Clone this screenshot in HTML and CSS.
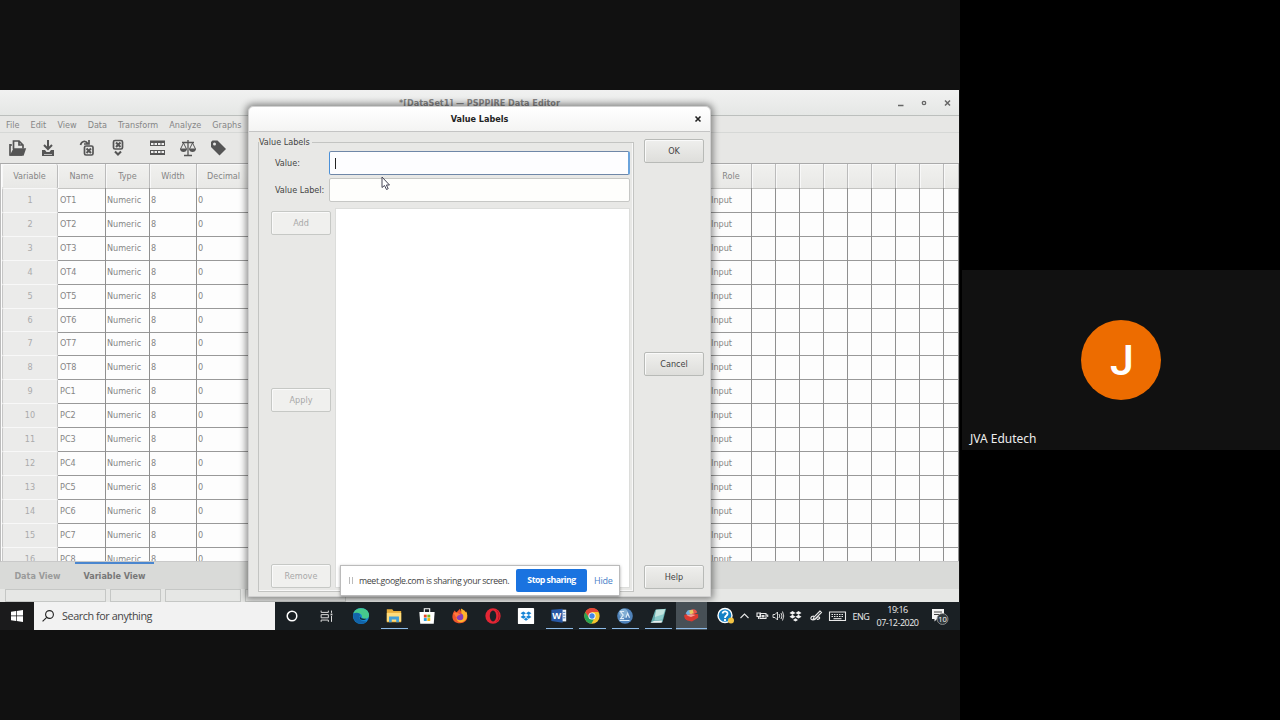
FILE: index.html
```
<!DOCTYPE html>
<html lang="en">
<head>
    <meta charset="UTF-8">
    <title>Value Labels</title>
    <link rel="stylesheet" href="styles.css">
</head>
<body>
    <div class="meeting">
        <div class="screen">
            <div class="app">
                <div class="titlebar">
                    <span class="app-title">*[DataSet1] — PSPPIRE Data Editor</span>
                    <svg class="win-btns" width="56" height="12" viewBox="0 0 56 12" fill="none" stroke="#666" stroke-width="1.500">
                        <path d="M1 8.500h5.500"/><circle cx="27" cy="6" r="1.700" stroke-width="1.300"/><path d="M48 3.500l5 5M53 3.500l-5 5"/>
                    </svg>
                </div>
                <div class="menubar">
                    <span>File</span><span>Edit</span><span>View</span><span>Data</span><span>Transform</span><span>Analyze</span><span>Graphs</span>
                </div>
                <div class="toolbar">
                    <svg width="240" height="30" viewBox="0 0 240 30" fill="none" stroke="#555" stroke-width="1.700">
                        <!-- open -->
                        <path d="M10 11v11h12M10 12h2M13.500 16V8h5.500l4 4v3.500M19 8v4h4"/>
                        <path d="M14 16h11l-2 6H11z" fill="#555"/>
                        <!-- save -->
                        <path d="M48 7v9M44 12l4 4 4-4" stroke-width="2"/>
                        <path d="M42 17h3l1.500 2h3l1.500-2h3v6H42z" fill="#555" stroke="none"/><path d="M44 21.500h8" stroke="#bbb" stroke-width="1"/>
                        <!-- go to case -->
                        <path d="M80.500 12c1-4 5-5 7.500-1M89 7v4h-5"/>
                        <rect x="84.500" y="13" width="8.500" height="9" rx="1.500"/><path d="M86.500 15.500l4.500 4.500M91 15.500l-4.500 4.500" stroke-width="2"/>
                        <!-- go to variable -->
                        <rect x="113.500" y="7.500" width="9" height="8.500" rx="1.500"/><path d="M116 9.500l4.500 4.500M120.500 9.500l-4.500 4.500M115 18.500l3 3 3-3" stroke-width="2.100"/>
                        <!-- split -->
                        <path d="M150 7.500h15v5.500h-15zM150 17h15v5h-15z" fill="#555" stroke="none"/>
                        <path d="M151 11h13M151 19h13" stroke="#eee" stroke-width="1.800" stroke-dasharray="2.500 1"/>
                        <!-- weights -->
                        <path d="M188 7v15M184 22.500h8M182 9.500h12" stroke-width="1.300"/>
                        <path d="M183.500 10l-3 6h6zM192.500 10l-3 6h6z" stroke-width="1"/>
                        <path d="M180 16h7q-.5 3-3.500 3t-3.500-3zM189 16h7q-.5 3-3.500 3t-3.500-3z" fill="#555" stroke="none"/>
                        <!-- labels -->
                        <path d="M211 9l1.500-1.500h5L226 16l-6.500 6.500L211 14z" fill="#555" stroke="none"/><circle cx="214.500" cy="11" r="1.500" fill="#e6e6e4" stroke="none"/>
                    </svg>
                </div>
                <div class="sheet" id="sheet">
                    <div class="row head">
                        <b></b><span>Variable</span><span>Name</span><span>Type</span><span>Width</span><span>Decimal</span><span></span><span>Role</span>
                        <span></span><span></span><span></span><span></span><span></span><span></span><span></span><span></span><span></span>
                    </div>
                </div>
                <div class="tabs"><span class="tab">Data View</span><span class="tab active">Variable View</span></div>
                <div class="statusbar"><i></i><i></i><i></i><i></i></div>

                <div class="dialog">
                    <div class="dialog-title">Value Labels
                        <svg class="close" width="8" height="8" viewBox="0 0 8 8" stroke="#222" stroke-width="1.600"><path d="M1.500 1.500l5 5M6.500 1.500l-5 5"/></svg>
                    </div>
                    <div class="dialog-body">
                        <fieldset class="frame">
                            <legend>Value Labels</legend>
                            <div class="field"><label>Value:</label><div class="entry focus"><i class="caret"></i></div></div>
                            <div class="field"><label>Value Label:</label><div class="entry"></div></div>
                            <div class="list-area">
                                <div class="side">
                                    <div class="button off">Add</div>
                                    <div class="button off">Apply</div>
                                    <div class="button off">Remove</div>
                                </div>
                                <div class="list"></div>
                            </div>
                        </fieldset>
                        <div class="actions">
                            <div class="button">OK</div>
                            <div class="button">Cancel</div>
                            <div class="button">Help</div>
                        </div>
                    </div>
                </div>

                <div class="share">
                    <i class="grip"></i>
                    <span class="share-text">meet.google.com is sharing your screen.</span>
                    <span class="stop">Stop sharing</span>
                    <span class="hide">Hide</span>
                </div>

                <svg class="pointer" width="10" height="15" viewBox="0 0 10 15"><path d="M1 1v10.500l2.500-2 2 4 1.700-.8-1.800-3.700H8.500z" fill="#fff" stroke="#445" stroke-width="1"/></svg>
            </div>

            <div class="taskbar">
                <div class="start">
                    <svg width="12" height="12" viewBox="0 0 12 12" fill="#fff"><path d="M0 1.700L5 1v4.600H0zM5.700.9L12 0v5.600H5.700zM0 6.300h5V11l-5-.7zM5.700 6.300H12V12l-6.300-.9z"/></svg>
                </div>
                <div class="search">
                    <svg width="12" height="12" viewBox="0 0 12 12" fill="none" stroke="#222" stroke-width="1.100"><circle cx="7.500" cy="4.500" r="3.900"/><path d="M4.700 7.300L.6 11.400"/></svg>
                    <span>Search for anything</span>
                </div>
                <div class="apps">
                    <span class="tool"><svg viewBox="0 0 20 20" fill="none" stroke="#fff" stroke-width="1.700"><circle cx="10" cy="10" r="5.300"/></svg></span>
                    <span class="tool"><svg viewBox="0 0 20 20" fill="none" stroke="#ddd" stroke-width="1.100"><path d="M3.500 4v2h8V4M3.500 8.500h8v3.500h-8zM3.500 16.500v-2h8v2M15 4v2.500M15 10v6.500"/><path d="M14 8.300h2" stroke-width="2"/></svg></span>
                    <span><svg viewBox="0 0 20 20">
                        <circle cx="10" cy="10" r="9" fill="#1687d3"/><path d="M1.500 7C4 0 16-1 18.700 7c1 4-1 7-5 6-4-.5-2-2-3-4S5 6 1.500 7z" fill="#46c98d"/>
                        <path d="M1.200 8c4-3 8-1 8 1-3 3-1 7 7 7-4 5-15 3-15-8z" fill="#1263a8"/><path d="M9.500 8.500c-1.500 3 1 5 6.500 4.500-2 2-7 2-7.500-1z" fill="#142a32"/></svg></span>
                    <span class="open"><svg viewBox="0 0 20 20"><path d="M2 2.500h6L9.500 4.500H18v12.500H2z" fill="#e9ae3b"/><path d="M2 6.500h16v9.500H2z" fill="#ffdc7b"/><path d="M4.500 10.500h11V17h-3v-3h-5v3h-3z" fill="#439ed8"/></svg></span>
                    <span><svg viewBox="0 0 20 20"><path d="M7 6V2h6v4" fill="none" stroke="#fff" stroke-width="1.200"/><path d="M1.500 5.500h17L17.500 18.500h-15z" fill="#fff"/><path d="M6.500 8.500h3.200v3.200H6.500z" fill="#e64a27"/><path d="M10.400 8.500h3.200v3.200h-3.200z" fill="#78b51b"/><path d="M6.500 12.300h3.200v3.200H6.500z" fill="#249fdf"/><path d="M10.400 12.300h3.200v3.200h-3.200z" fill="#f4b400"/></svg></span>
                    <span><svg viewBox="0 0 20 20"><path d="M4 4l2 2 4-4 1 3 4-1c6 6 3 14-5 14S-1 11 4 4z" fill="#f1552c"/><path d="M11 2c2 0 5 3 5 4l1-1c3 6-1 12-6 12-3 0-5-2-5-5 2 2 6 1 6-3z" fill="#ffb32c"/><circle cx="10" cy="11" r="3.700" fill="#8b3db8"/><path d="M3 7c3-2 5 0 8 2-4 0-4 2-5 3z" fill="#ff793b"/></svg></span>
                    <span><svg viewBox="0 0 20 20"><circle cx="10" cy="10" r="8.500" fill="#e32634"/><path d="M13 3a8 8 0 010 14 9 9 0 000-14z" fill="#a70d1c"/><ellipse cx="10" cy="10" rx="3.600" ry="6" fill="#1b2228"/></svg></span>
                    <span><svg viewBox="0 0 20 20"><rect x="1" y="1" width="18" height="18" rx="1" fill="#fff"/><path d="M7 5l3 2-3 2-3-2zM13 5l3 2-3 2-3-2zM7 9l3 2-3 2-3-2zM13 9l3 2-3 2-3-2zM10 12l2.500 1.600L10 15.300l-2.500-1.700z" fill="#1785d7"/></svg></span>
                    <span class="open"><svg viewBox="0 0 20 20"><path d="M10 3h8v13h-8z" fill="#eef4fc"/><path d="M14.500 6H17M14.500 9H17M14.500 12H17" stroke="#3c72b8"/><path d="M1.500 3L14 2v15.500L1.500 15.500z" fill="#2858a5"/><text x="2.500" y="13.300" class="word-letter">W</text></svg></span>
                    <span class="open"><svg viewBox="0 0 20 20"><circle cx="10" cy="10" r="8.500" fill="#f5c52d"/><path d="M2.600 5.800a8.500 8.500 0 0115-.2H10L6.500 12z" fill="#e34436"/><path d="M2.600 5.800l4.300 6.400L12 14l-2.800 4.500A8.500 8.500 0 012.600 5.800z" fill="#29a254"/><circle cx="10" cy="10" r="4" fill="#fff"/><circle cx="10" cy="10" r="3" fill="#4486e8"/></svg></span>
                    <span class="open"><svg viewBox="0 0 20 20"><circle cx="10" cy="10" r="8.700" fill="#4f82b9"/><circle cx="8.500" cy="7" r="5" fill="#83afd4"/><path d="M9 5H5l3 4-3 4h4M11 12l2-5 2 5M4 15h11" fill="none" stroke="#dcebf7" stroke-width="1.300"/></svg></span>
                    <span class="open"><svg viewBox="0 0 20 20"><path d="M7 3l12-1-4 15-13 .5z" fill="#62a8aa"/><path d="M8 3l10-.5-3 11.500-9 1z" fill="#8ccbca"/><path d="M8 3l10-.5L16 8 6.500 11z" fill="#c3e4df"/><path d="M1.500 17.500L5.500 15.500l9-.5-.5 2.500z" fill="#e7eeee"/></svg></span>
                    <span class="open current"><svg viewBox="0 0 20 20"><path d="M2.500 9l7-2.500L18 8v4l-7 4-5-1q-4-2-3.500-6z" fill="#d93a31"/><path d="M4 7l2.500-3.500L11 3v5L6 9z" fill="#74b3e0"/><path d="M10 3q5-2 7 3l-5 2z" fill="#e7564c"/><path d="M8 4l4-1 1 4-4 1z" fill="#e8c860"/><path d="M5 9.500l6-1.500 4 1-5 2z" fill="#f2a096"/></svg></span>
                </div>
                <div class="tray">
                    <svg width="18" height="18" viewBox="0 0 18 18"><circle cx="8" cy="8.500" r="7" fill="#1581c5" stroke="#fff" stroke-width="1.400"/><path d="M5.500 6.500C6 3 11 4 10.500 7 10 9 8 8.500 8 11M8 12v2" fill="none" stroke="#fff" stroke-width="1.800"/><circle cx="14" cy="13.500" r="3" fill="#f3c444"/></svg>
                    <svg width="118" height="18" viewBox="0 0 118 18" fill="none" stroke="#e8e8e8" stroke-width="1.100">
                        <path d="M5.500 11L9.500 7l4 4"/>
                        <path d="M25 6.500h6v5h-6zM31.500 8h1.200v2M22 6h3.500v3.500H22zM23.500 9.500v2.500"/><path d="M26.500 8h3v2.500h-3z" fill="#ddd" stroke="none"/>
                        <path d="M38 7.500h2l2.500-2.500v8L40 10.500h-2zM44 7q1.500 2 0 4M46 6q2 3 0 6M47.500 4.500q2.500 4.500 0 9" stroke-width=".9"/>
                        <path d="M57.500 4l3 1.900-3 1.900-3-1.900zM63.500 4l3 1.900-3 1.900-3-1.900zM57.500 7.800l3 1.900-3 1.900-3-1.900zM63.500 7.800l3 1.900-3 1.900-3-1.900zM60.500 11.300l2.500 1.600-2.500 1.600-2.500-1.600z" fill="#f4f4f4" stroke="none"/>
                        <path d="M85 4l-6 6-1 2.500 2.500-1 6-6zM79 9c-4 0-4 4-1 4 4 0 3-4 6-3 2 1-1 3-2 2"/>
                        <path d="M94.500 5h16v8.500h-16z"/><path d="M96.500 7.500h12M96.500 9.500h12" stroke-dasharray="1.500 1"/><path d="M98.500 11.700h8"/>
                    </svg>
                    <span class="lang">ENG</span>
                    <span class="clock">19:16<br>07-12-2020</span>
                    <svg class="notes" width="20" height="18" viewBox="0 0 20 18"><path d="M1 2h12v10H6l-2.500 2.500V12H1z" fill="#f4f4f4"/><path d="M3 5h8M3 7.500h8" stroke="#444"/><circle cx="11.500" cy="12" r="5.500" fill="#333a3d" stroke="#999" stroke-width=".8"/><text x="7.300" y="15" class="badge">10</text></svg>
                </div>
            </div>
        </div>

        <div class="people">
            <div class="tile">
                <div class="avatar">J</div>
                <div class="person">JVA Edutech</div>
            </div>
        </div>
    </div>

    <script>
        var oSheet = document.getElementById('sheet');
        for(var i=1; i<=16; i++){
            var name = i <= 8 ? 'OT' + i : 'PC' + (i - 8);
            var cells = ['', i, name, 'Numeric', '8', '0', '', 'Input', '', '', '', '', '', '', '', '', ''];
            var row = document.createElement('div');
            row.className = 'row';
            for(var j=0; j<cells.length; j++){
                var cell = document.createElement(j == 0 ? 'b' : 'span');
                cell.textContent = cells[j];
                row.appendChild(cell);
            }
            oSheet.appendChild(row);
        }
    </script>
</body>
</html>
```
FILE: styles.css
```
*{
    box-sizing: border-box;
    margin: 0;
    padding: 0;
}
body{
    width: 1280px;
    height: 720px;
    overflow: hidden;
    background-color: #000;
    font-family: "DejaVu Sans Condensed", "DejaVu Sans", sans-serif;
    font-size: 9px;
}
svg{
    display: block;
    flex: none;
}
.meeting{
    display: flex;
    height: 720px;
}
.screen{
    width: 960px;
    padding: 90px 0;
    background-color: #111;
}
.app{
    position: relative;
    display: flex;
    flex-direction: column;
    width: 959px;
    height: 512px;
    overflow: hidden;
    background-color: #e7e7e5;
    color: #858585;
}

/* main window */
.titlebar{
    display: flex;
    justify-content: center;
    height: 26px;
    padding-top: 7px;
    border-bottom: 1px solid #bcbfbd;
    background: linear-gradient(#f1f1f1, #e5e7e5);
    position: relative;
}
.app-title{
    font-weight: bold;
    font-size: 9px;
    color: #858585;
    line-height: 13px;
}
.win-btns{
    position: absolute;
    right: 6px;
    top: 7px;
}
.menubar{
    display: flex;
    gap: 11.1px;
    height: 17px;
    padding-left: 6px;
    line-height: 18px;
    border-bottom: 1px solid #d6d8d6;
}
.toolbar{
    height: 31px;
    border-bottom: 1px solid #aaa;
}
.sheet{
    height: 398px;
    overflow: hidden;
    border-left: 1px solid #bbb;
    border-bottom: 1px solid #c9c9c9;
    background-color: #fdfdfd;
}
.row{
    display: grid;
    grid-template-columns: 1px 56px 48px 44px 47px 54px 460px 41px repeat(8, 24px) 15px;
    height: 23.93px;
    line-height: 24px;
}
.row span{
    padding-left: 1px;
    border-right: 1px solid #909090;
    border-bottom: 1px solid #999;
    white-space: nowrap;
}
.row span:nth-child(2){
    padding: 0;
    text-align: center;
    color: #aaa;
    background-color: #ebebea;
    border: 1px solid #c6c6c6;
    border-top-color: #f8f8f8;
    border-radius: 2px;
    line-height: 22px;
}
.row span:nth-child(3){
    padding-left: 2px;
}
.row span:nth-child(8){
    padding-left: 0;
}
.row.head span,
.row.head span:nth-child(2){
    padding: 0;
    text-align: center;
    color: #858585;
    background: linear-gradient(#f1f1ef, #e8e8e6);
    border: 0;
    border-right: 1px solid #bbb;
    border-bottom: 1px solid #c4c4c2;
    box-shadow: inset 1px 1px #f8f8f8;
    line-height: 24px;
}
.tabs{
    display: flex;
    height: 27px;
    background-color: #d9dad8;
    font-weight: bold;
    font-size: 9px;
    line-height: 28px;
    text-align: center;
}
.tab{
    width: 75px;
    color: #9a9a9a;
}
.tab.active{
    width: 79px;
    color: #777;
    border-top: 2px solid #4a86cf;
    line-height: 24px;
}
.statusbar{
    display: flex;
    gap: 4px;
    height: 13px;
    padding-left: 5px;
    background-color: #e6e7e5;
}
.statusbar i{
    width: 101px;
    border: 1px solid #c5c7c5;
}
.statusbar i:nth-child(2){
    width: 51px;
}
.statusbar i:nth-child(3){
    width: 76px;
}

/* value labels dialog */
.dialog{
    position: absolute;
    left: 248px;
    top: 16px;
    width: 463px;
    height: 491px;
    border: 1px solid #d0d0d0;
    border-radius: 5px 5px 0 0;
    background-color: #e8e8e6;
    box-shadow: 0 0 7px 2px rgba(0, 0, 0, 0.45);
    color: #444;
}
.dialog-title{
    position: relative;
    height: 25px;
    border-bottom: 1px solid #c4c4c4;
    border-radius: 5px 5px 0 0;
    background: linear-gradient(#fff, #f4f4f3);
    color: #222;
    font-weight: bold;
    font-size: 9px;
    line-height: 24px;
    text-align: center;
}
.close{
    position: absolute;
    right: 8px;
    top: 8px;
}
.dialog-body{
    display: flex;
    height: 464px;
    padding: 4px 6px 4px 9px;
}
.frame{
    width: 376px;
    height: 456px;
    padding: 3px 3px 3px 12px;
    border: 1px solid #c3c4c2;
    box-shadow: inset -1px -1px #f8f8f8;
}
.frame legend{
    margin-left: -12px;
    padding: 0 2px 0 0;
    height: 12px;
    line-height: 12px;
}
.field{
    display: flex;
    height: 24px;
    margin-bottom: 3px;
}
.field label{
    width: 58px;
    padding-left: 4px;
    line-height: 24px;
    white-space: nowrap;
}
.entry{
    flex: 1;
    border: 1px solid #c6c7c5;
    border-radius: 2px;
    background-color: #fefefc;
    padding: 6px 5px;
}
.entry.focus{
    border: 2px solid #4a90d9;
    border-width: 1px 2px 1px 1px;
    border-color: #6f87a8 #6aa3dc #6f87a8 #4a90d9;
    background-color: #fdfdff;
}
.caret{
    display: block;
    width: 1px;
    height: 11px;
    background-color: #222;
}
.list-area{
    display: flex;
    gap: 4px;
    height: 380px;
    margin-top: 6px;
}
.side{
    display: flex;
    flex-direction: column;
    justify-content: space-between;
    width: 60px;
    padding: 3px 0 0;
}
.list{
    flex: 1;
    border: 1px solid #dcdddb;
    background-color: #fff;
}
.button{
    height: 24px;
    border: 1px solid #b8bab7;
    border-radius: 2px;
    background: linear-gradient(#efefed, #dededb);
    box-shadow: inset 1px 1px #fafafa;
    color: #444;
    line-height: 23px;
    text-align: center;
}
.button.off{
    border-color: #c6c8c5;
    background: #f0f0ee;
    color: #a8a8a8;
}
.actions{
    display: flex;
    flex-direction: column;
    justify-content: space-between;
    width: 60px;
    margin-left: 10px;
    padding: 3px 0 3px;
}

/* screen sharing bar */
.share{
    position: absolute;
    left: 340px;
    top: 475px;
    display: flex;
    align-items: center;
    width: 280px;
    height: 31px;
    padding-left: 8px;
    border: 1px solid #bbb;
    background-color: #fff;
    box-shadow: 0 1px 3px rgba(0, 0, 0, 0.35);
    font-family: "Open Sans", "Noto Sans", sans-serif;
    font-size: 9px;
    color: #444;
}
.grip{
    width: 4px;
    height: 7px;
    margin-right: 6px;
    border: 1px solid #bbb;
    border-width: 0 1px;
}
.share-text{
    width: 157px;
    font-size: 8.8px;
    white-space: nowrap;
    letter-spacing: -0.38px;
}
.stop{
    width: 71px;
    height: 23px;
    border-radius: 2px;
    background-color: #1a73e0;
    color: #fff;
    font-size: 8.8px;
    font-weight: bold;
    line-height: 23px;
    text-align: center;
    letter-spacing: -0.55px;
}
.hide{
    margin-left: 7px;
    color: #4a7fc8;
    letter-spacing: -0.2px;
}
.pointer{
    position: absolute;
    left: 381px;
    top: 86px;
}

/* windows taskbar */
.taskbar{
    display: flex;
    height: 28px;
    background-color: #1a2024;
    font-family: "Open Sans", "Noto Sans", sans-serif;
}
.start{
    display: flex;
    align-items: center;
    justify-content: center;
    width: 34px;
    background-color: #1b1b1c;
}
.search{
    display: flex;
    align-items: center;
    gap: 8px;
    width: 241px;
    padding-left: 8px;
    background-color: #f2f2f2;
    color: #444;
    font-size: 10.8px;
    line-height: 26px;
    letter-spacing: -0.42px;
}
.search span{
    padding-bottom: 1px;
}
.apps{
    display: flex;
    width: 432.5px;
}
.apps span{
    display: flex;
    flex: none;
    align-items: center;
    justify-content: center;
    width: 33px;
    border-bottom: 1px solid transparent;
}
.apps .tool{
    width: 34.75px;
}
.apps svg{
    width: 18px;
    height: 18px;
}
.apps .open{
    box-shadow: inset 3px 0 #1a2024, inset -3px 0 #1a2024, inset 0 -1px #8dbbe8;
}
.apps .current{
    width: 31px;
    margin-left: 1px;
    background-color: #475056;
    box-shadow: inset 0 -1px #8dbbe8;
}
.word-letter{
    font: bold 10.5px "Liberation Sans", sans-serif;
    fill: #fff;
}
.tray{
    display: flex;
    align-items: center;
    padding-left: 9px;
    color: #eee;
    font-size: 9px;
}
.lang{
    width: 18px;
    font-size: 9px;
    letter-spacing: -0.5px;
}
.clock{
    width: 54px;
    line-height: 13px;
    text-align: center;
    letter-spacing: -0.5px;
}
.tray .notes{
    margin-left: 6px;
}
.badge{
    font: 7.5px "Open Sans", sans-serif;
    fill: #fff;
}

/* participant */
.people{
    display: flex;
    align-items: center;
    width: 320px;
    padding-left: 2px;
}
.tile{
    display: flex;
    flex-direction: column;
    align-items: center;
    width: 318px;
    height: 180px;
    padding-top: 50px;
    background-color: #111;
}
.avatar{
    width: 80px;
    height: 80px;
    padding-left: 2px;
    border-radius: 50%;
    background-color: #ed6c00;
    color: #fff;
    font-family: Roboto, sans-serif;
    font-weight: 500;
    font-size: 43px;
    line-height: 81px;
    text-align: center;
}
.person{
    align-self: flex-start;
    margin: 30px 0 0 8px;
    color: #eee;
    font-family: "Noto Sans", sans-serif;
    font-size: 12px;
    line-height: 18px;
}
```
